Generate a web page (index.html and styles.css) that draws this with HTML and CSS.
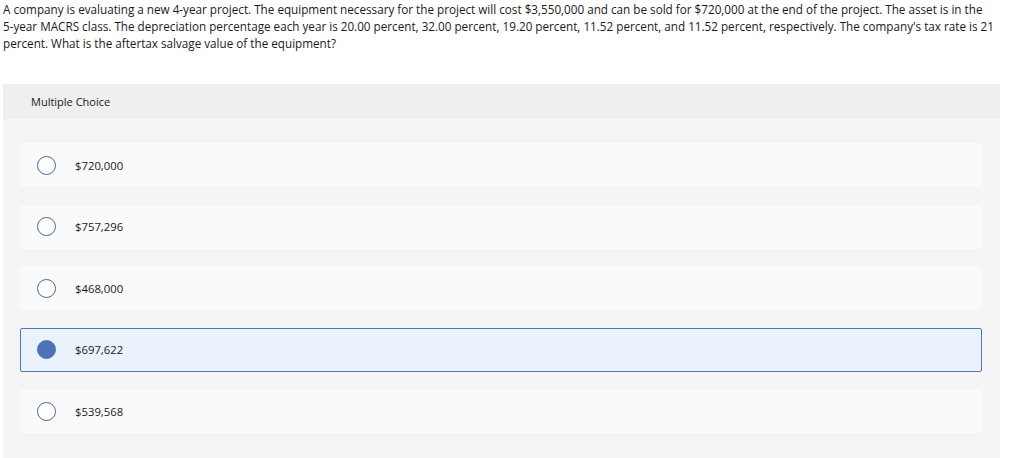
FILE: index.html
```html
<!DOCTYPE html>
<html>
<head>
<meta charset="utf-8">
<link rel="stylesheet" href="styles.css">
</head>
<body>
<div class="page">
  <p class="question">A company is evaluating a new 4-year project. The equipment necessary for the project will cost $3,550,000 and can be sold for $720,000 at the end of the project. The asset is in the <span class="nowrap">5-year</span> MACRS class. The depreciation percentage each year is 20.00 percent, 32.00 percent, 19.20 percent, 11.52 percent, and 11.52 percent, respectively. The company's tax rate is 21 percent. What is the aftertax salvage value of the equipment?</p>
  <div class="panel">
    <div class="panel-head">Multiple Choice</div>
    <div class="options">
      <div class="option"><span class="radio"></span><span class="label">$720,000</span></div>
      <div class="option"><span class="radio"></span><span class="label">$757,296</span></div>
      <div class="option"><span class="radio"></span><span class="label">$468,000</span></div>
      <div class="option selected"><span class="radio"></span><span class="label">$697,622</span></div>
      <div class="option"><span class="radio"></span><span class="label">$539,568</span></div>
    </div>
  </div>
</div>
</body>
</html>
```
FILE: styles.css
```css
html, body {
  margin: 0;
  padding: 0;
  background: #ffffff;
}
body {
  font-family: "Open Sans", "Liberation Sans", sans-serif;
  color: #1a1a1a;
}
.page {
  padding: 1px 0 0 3px;
  width: 997px;
}
.question {
  margin: 0;
  font-size: 11.7px;
  line-height: 17px;
  width: 996px;
}
.nowrap {
  white-space: nowrap;
}
.panel {
  margin-top: 32px;
  background: #f5f5f5;
  height: 380px;
}
.panel-head {
  background: #efefef;
  height: 35px;
  display: flex;
  align-items: center;
  padding-left: 28px;
  font-size: 11px;
}
.options {
  display: flex;
  flex-direction: column;
  gap: 17.6px;
  padding: 24px 18px 0 17px;
}
.option {
  height: 44px;
  background: #fafafa;
  border-radius: 3px;
  display: flex;
  align-items: center;
  padding-left: 17px;
  box-sizing: border-box;
}
.option.selected {
  background: #eaf2fb;
  border: 1px solid #4f78b8;
  border-radius: 2px;
  padding-left: 16px;
}
.radio {
  width: 19px;
  height: 19px;
  box-sizing: border-box;
  border: 1px solid #3f6aa8;
  border-radius: 50%;
  background: #ffffff;
  flex: none;
}
.selected .radio {
  background: #4a74b4;
  border-color: #4a74b4;
}
.label {
  margin-left: 19px;
  font-size: 11.3px;
}
```
